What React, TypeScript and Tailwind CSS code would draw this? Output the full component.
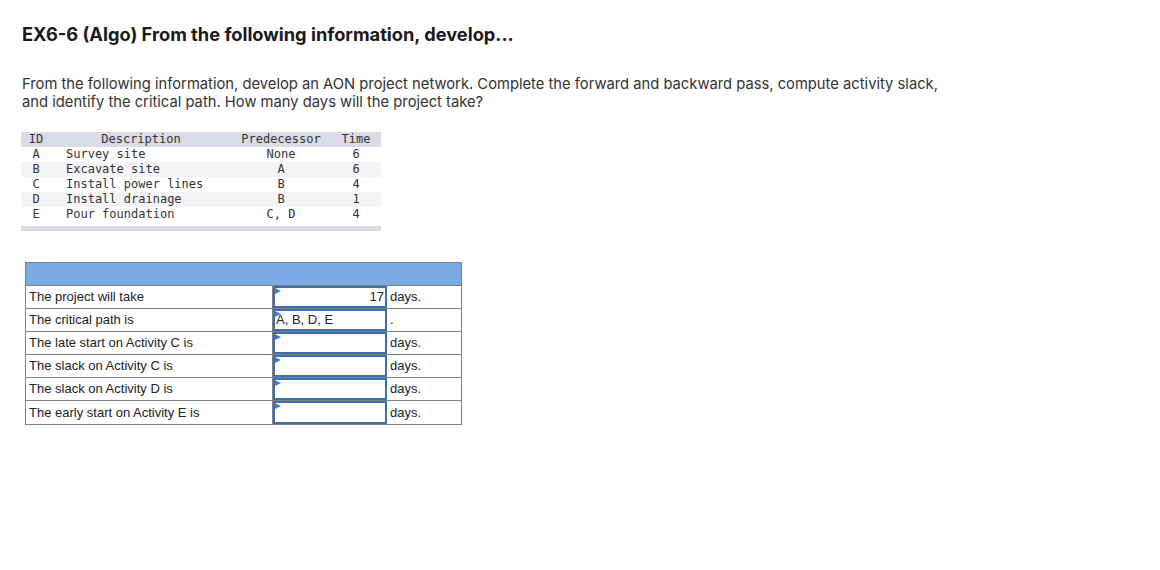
import React from "react";

const activities = [
  { id: "A", desc: "Survey site", pred: "None", time: "6" },
  { id: "B", desc: "Excavate site", pred: "A", time: "6" },
  { id: "C", desc: "Install power lines", pred: "B", time: "4" },
  { id: "D", desc: "Install drainage", pred: "B", time: "1" },
  { id: "E", desc: "Pour foundation", pred: "C, D", time: "4" },
];

const questions = [
  { label: "The project will take", value: "17", align: "right", unit: "days." },
  { label: "The critical path is", value: "A, B, D, E", align: "left", unit: "." },
  { label: "The late start on Activity C is", value: "", align: "right", unit: "days." },
  { label: "The slack on Activity C is", value: "", align: "right", unit: "days." },
  { label: "The slack on Activity D is", value: "", align: "right", unit: "days." },
  { label: "The early start on Activity E is", value: "", align: "right", unit: "days." },
];

function Flag() {
  return (
    <svg width="6" height="6" viewBox="0 0 6 6" className="absolute left-0 top-0">
      <polygon points="0,0 6,3 0,6" fill="#3b7dd8" />
    </svg>
  );
}

export default function App() {
  return (
    <div className="h-[570px] w-[1160px] bg-white px-[22px] pt-[23px] text-[#222]">
      <h1 className="font-['Inter',sans-serif] text-[18.25px] font-bold leading-[22px] text-[#1a1a1a]">
        EX6-6 (Algo) From the following information, develop...
      </h1>

      <p className="mt-[30px] w-[940px] font-['Inter',sans-serif] text-[14.75px] leading-[18px] text-[#333]">
        From the following information, develop an AON project network. Complete the forward and backward pass, compute activity slack,
        <br />
        and identify the critical path. How many days will the project take?
      </p>

      <div className="ml-[-1px] mt-[21px] w-[360px] font-['DejaVu_Sans_Mono','Liberation_Mono',monospace] text-[12px] leading-[15px] text-[#333]">
        <div className="flex h-[15px] bg-[#d9dce6]">
          <div className="w-[30px] text-center">ID</div>
          <div className="w-[180px] text-center">Description</div>
          <div className="w-[100px] text-center">Predecessor</div>
          <div className="w-[50px] text-center">Time</div>
        </div>
        {activities.map((a, i) => (
          <div key={a.id} className={`flex h-[15px] ${i % 2 === 1 ? "bg-[#f4f4f6]" : "bg-white"}`}>
            <div className="w-[30px] text-center">{a.id}</div>
            <div className="w-[180px] pl-[15px]">{a.desc}</div>
            <div className="w-[100px] text-center">{a.pred}</div>
            <div className="w-[50px] text-center">{a.time}</div>
          </div>
        ))}
        <div className="mt-[4px] h-[5px] bg-[#d9dce6]" />
      </div>

      <div className="ml-[3px] mt-[31px] w-[437px] border border-[#808080] font-['Liberation_Sans',Arial,sans-serif] text-[13px] text-[#222]">
        <div className="h-[23px] border-b border-[#808080] bg-[#7aace3]" />
        {questions.map((q, i) => (
          <div key={i} className={`flex h-[23px] ${i < questions.length - 1 ? "border-b border-[#808080]" : ""}`}>
            <div className="flex w-[247px] items-center border-r border-[#808080] pl-[3px]">{q.label}</div>
            <div className="relative w-[114px] border-2 border-[#3f6fa8]">
              <Flag />
              <div className={`flex h-full items-center px-[1px] ${q.align === "right" ? "justify-end" : "justify-start"}`}>
                {q.value}
              </div>
            </div>
            <div className="flex flex-1 items-center pl-[3px]">{q.unit}</div>
          </div>
        ))}
      </div>
    </div>
  );
}
